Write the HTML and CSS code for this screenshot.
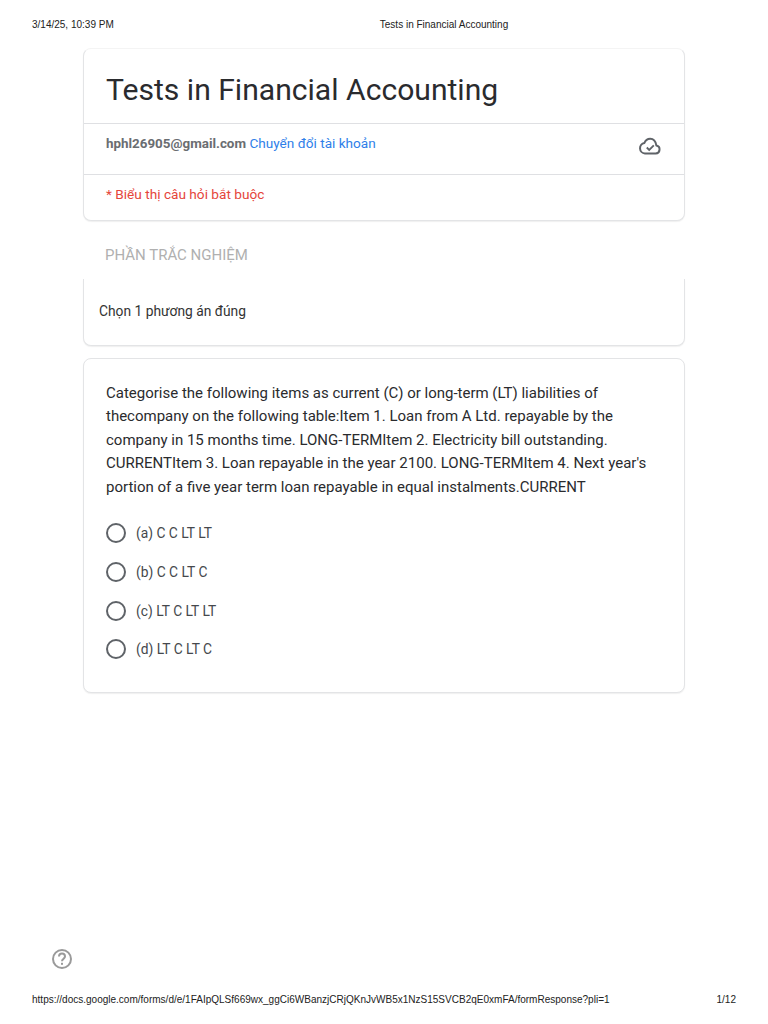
FILE: index.html
```html
<!DOCTYPE html>
<html lang="vi">
<head>
<meta charset="utf-8">
<title>Tests in Financial Accounting</title>
<link rel="stylesheet" href="styles.css">
</head>
<body>
<div class="page">
  <header class="print-head">
    <span class="print-date">3/14/25, 10:39 PM</span>
    <span class="print-title">Tests in Financial Accounting</span>
  </header>
  <main class="form">
    <section class="card card-head">
      <h1 class="title">Tests in Financial Accounting</h1>
      <div class="account">
        <div class="account-text"><b class="email">hphl26905@gmail.com</b> <a class="switch">Chuyển đổi tài khoản</a></div>
        <svg class="cloud" viewBox="0 0 24 24" width="24" height="24" aria-hidden="true">
          <path d="M6.900 19.500h10.800a4 4 0 0 0 .7-7.900C17.700 7.500 15.200 4.800 12.200 4.800 9.600 4.800 7.400 6.400 6.400 9A5.300 5.300 0 0 0 6.900 19.500z" fill="none" stroke="#5f6368" stroke-width="2" stroke-linejoin="round"/>
          <path d="M8.800 13.500l2.400 2.400 4.600-4.600" fill="none" stroke="#5f6368" stroke-width="1.800"/>
        </svg>
      </div>
      <div class="required">* Biểu thị câu hỏi bắt buộc</div>
    </section>
    <h2 class="section-name">PHẦN TRẮC NGHIỆM</h2>
    <section class="card card-note">Chọn 1 phương án đúng</section>
    <section class="card card-question">
      <p class="question">Categorise the following items as current (C) or long-term (LT) liabilities of thecompany on the following table:Item 1. Loan from A Ltd. repayable by the company in 15 months time. LONG-TERMItem 2. Electricity bill outstanding. CURRENTItem 3. Loan repayable in the year 2100. LONG-TERMItem 4. Next year's portion of a five year term loan repayable in equal instalments.CURRENT</p>
      <div class="options">
        <div class="option"><span class="radio"></span><span>(a) C C LT LT</span></div>
        <div class="option"><span class="radio"></span><span>(b) C C LT C</span></div>
        <div class="option"><span class="radio"></span><span>(c) LT C LT LT</span></div>
        <div class="option"><span class="radio"></span><span>(d) LT C LT C</span></div>
      </div>
    </section>
  </main>
  <div class="help-row">
    <svg viewBox="0 0 24 24" width="24" height="24" aria-hidden="true">
      <circle cx="12" cy="12" r="9" fill="none" stroke="#9a9a9a" stroke-width="2"/>
      <path d="M9 9.600a3 3 0 0 1 6 0c0 2-3 2.200-3 4.600" fill="none" stroke="#9a9a9a" stroke-width="2"/>
      <rect x="11" y="15.800" width="2" height="2" fill="#9a9a9a"/>
    </svg>
  </div>
  <footer class="print-foot">
    <span>https://docs.google.com/forms/d/e/1FAIpQLSf669wx_ggCi6WBanzjCRjQKnJvWB5x1NzS15SVCB2qE0xmFA/formResponse?pli=1</span>
    <span>1/12</span>
  </footer>
</div>
</body>
</html>
```
FILE: styles.css
```css
* { box-sizing: border-box; }
html, body { margin: 0; padding: 0; background: #fff; }
.page {
  width: 768px;
  height: 1024px;
  display: flex;
  flex-direction: column;
  overflow: hidden;
  font-family: Roboto, "Noto Sans", sans-serif;
  color: #202124;
}
.print-head {
  display: flex;
  height: 48px;
  padding: 18px 0 0 32px;
  font: 10px/13px "Liberation Sans", sans-serif;
  color: #222;
}
.print-date { width: 88px; }
.print-title {
  flex: 1;
  text-align: center;
}
.form {
  width: 602px;
  margin-left: 83px;
  flex: 1;
}
.card {
  background: #fff;
  border: 1px solid #e3e4e6;
  border-radius: 8px;
  box-shadow: 0 1px 1px rgba(60, 64, 67, .08);
}
.card-head {
  height: 173px;
  border-top-color: #f4f4f4;
}
.title {
  margin: 0;
  height: 75px;
  padding: 21px 22px 0;
  font-size: 30.1px;
  line-height: 40px;
  font-weight: 400;
  color: #2a2b2e;
  border-bottom: 1px solid #dfe0e3;
}
.account {
  height: 51px;
  padding: 10px 22px 0;
  display: flex;
  justify-content: space-between;
  align-items: flex-start;
  border-bottom: 1px solid #dfe0e3;
  font-size: 13.6px;
  line-height: 18px;
}
.email { color: #6a6d71; font-weight: 700; font-size: 13.4px; }
.switch { color: #2f7fe9; }
.cloud { flex: none; }
.required {
  padding: 9.500px 22px 0;
  font-size: 13.65px;
  line-height: 18px;
  color: #e5453b;
}
.section-name {
  margin: 0;
  height: 58px;
  padding: 23px 22px 0;
  font-size: 15px;
  line-height: 22px;
  font-weight: 400;
  color: #b0b0b0;
}
.card-note {
  height: 67px;
  padding: 22px 15px 0;
  font-size: 13.8px;
  line-height: 20px;
  color: #333;
  border-top: 0;
  border-top-left-radius: 0;
  border-top-right-radius: 0;
}
.card-question {
  height: 335px;
  margin-top: 12px;
  padding: 23px 22px 0;
}
.question {
  margin: 0;
  font-size: 15px;
  line-height: 23.4px;
  color: #2a2b2e;
}
.options {
  margin-top: 24px;
  display: flex;
  flex-direction: column;
  gap: 18.800px;
}
.option {
  display: flex;
  align-items: center;
  gap: 10px;
  height: 20px;
  font-size: 13.8px;
  color: #45484c;
}
.radio {
  width: 20px;
  height: 20px;
  border: 2px solid #5f6368;
  border-radius: 50%;
}
.help-row {
  height: 46px;
  padding-left: 50px;
  display: flex;
  align-items: flex-start;
}
.help-row svg { display: block; }
.print-foot {
  height: 31px;
  padding: 0 32px;
  display: flex;
  justify-content: space-between;
  font: 10.03px/13px "Liberation Sans", sans-serif;
  color: #222;
}
```
